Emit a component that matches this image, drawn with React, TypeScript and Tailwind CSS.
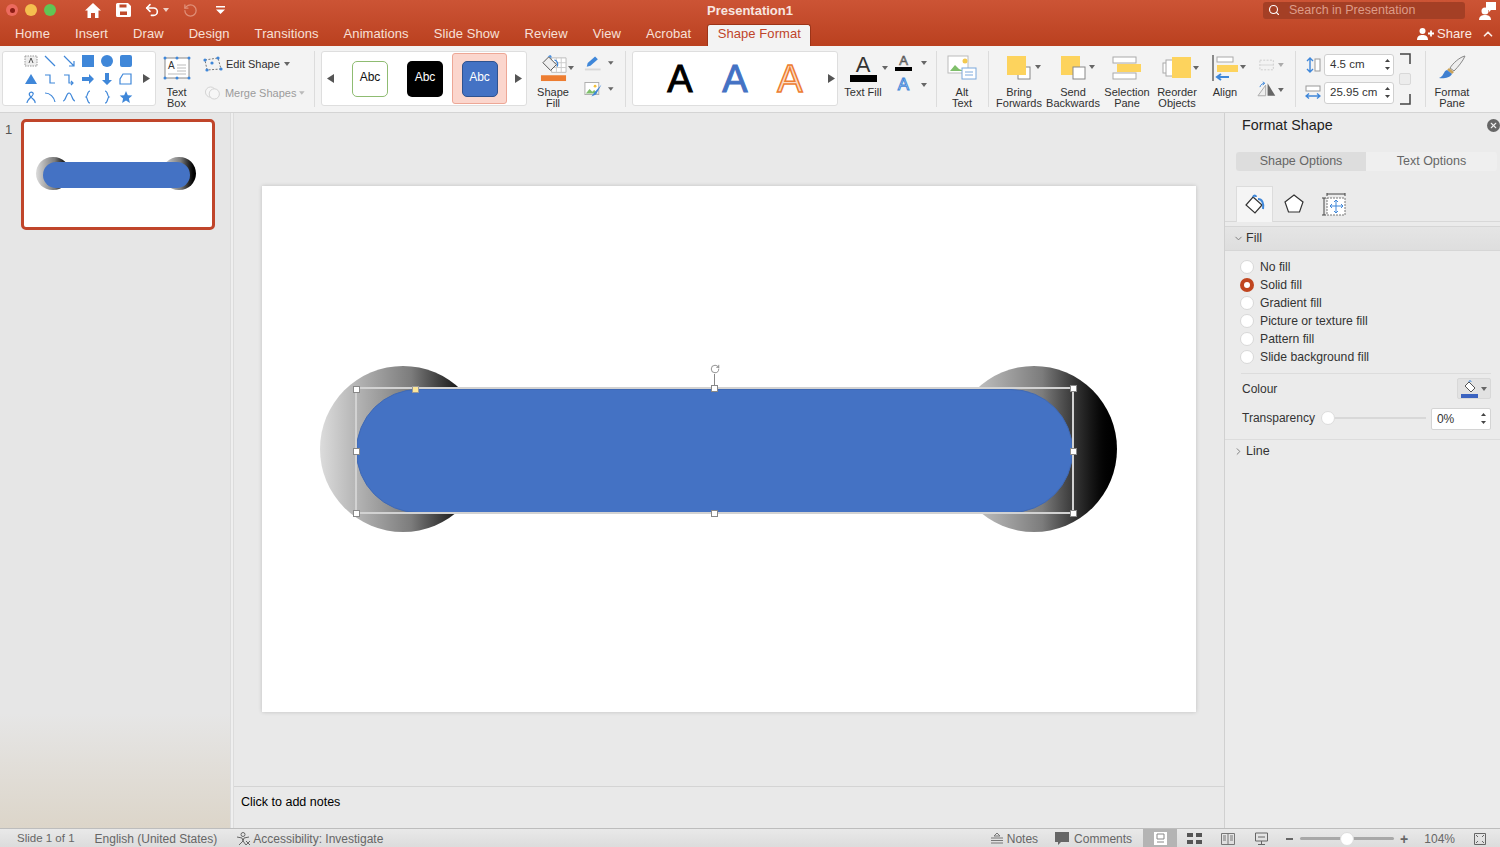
import { ChevronDown, ChevronRight, ChevronUp, RotateCw, Search, Undo2, X } from 'lucide-react';
import type { ReactNode } from 'react';

const blue = '#3f87d9';

const Caret = ({ className = '' }: { className?: string }) => (
  <svg width="6" height="4" viewBox="0 0 6 4" className={className}>
    <path d="M0 0h6L3 4z" fill="#666" />
  </svg>
);

const Sep = ({ ml }: { ml: string }) => <div className={`${ml} w-px h-[56px] bg-[#dcdcdc] shrink-0`} />;

const RibbonBtn = ({ label, icon, className }: { label: ReactNode; icon: ReactNode; className: string }) => (
  <div className={`${className} shrink-0 flex flex-col items-center`}>
    <div className="h-[36px] pb-[2px] flex items-center justify-center">{icon}</div>
    <div className="text-[11px] leading-[11px] text-center text-[#303030] whitespace-nowrap">{label}</div>
  </div>
);

const shapeIcons: ReactNode[] = [
  <g key="a"><rect x="1" y="2" width="12" height="10" fill="#eee" stroke="#999" strokeDasharray="1.5 1" /><path d="M5 9l2-5 2 5" stroke="#555" fill="none" /></g>,
  <path key="b" d="M2 2l10 10" stroke={blue} strokeWidth="1.2" />,
  <path key="c" d="M2 2l10 10M12 7v5H7" stroke={blue} strokeWidth="1.2" fill="none" />,
  <rect key="d" x="1" y="1" width="12" height="12" fill={blue} />,
  <circle key="e" cx="7" cy="7" r="6" fill={blue} />,
  <rect key="f" x="1" y="1" width="12" height="12" rx="2" fill={blue} />,
  <path key="g" d="M7 2l6 10H1z" fill={blue} />,
  <path key="h" d="M2 3h5v8h5" stroke={blue} strokeWidth="1.2" fill="none" />,
  <path key="i" d="M2 3h5v8h4M9 9l2 2-2 2" stroke={blue} strokeWidth="1.2" fill="none" />,
  <path key="j" d="M1 5h7V2l5 5-5 5V9H1z" fill={blue} />,
  <path key="k" d="M5 1h4v7h3l-5 5-5-5h3z" fill={blue} />,
  <path key="l" d="M4 2h8v10H1V7z" fill="none" stroke={blue} strokeWidth="1.2" />,
  <path key="m" d="M3 13c0-4 8-8 6-10C7 1 4 3 6 6c2 3 6 4 5 7" stroke={blue} strokeWidth="1.2" fill="none" />,
  <path key="n" d="M2 3c5 0 9 4 10 9" stroke={blue} strokeWidth="1.2" fill="none" />,
  <path key="o" d="M1 11c3 0 3-8 6-8s3 8 6 8" stroke={blue} strokeWidth="1.2" fill="none" />,
  <path key="p" d="M9 1C6 1 7 6 5 7c2 1 1 6 4 6" stroke={blue} strokeWidth="1.2" fill="none" />,
  <path key="q" d="M5 1c3 0 2 5 4 6-2 1-1 6-4 6" stroke={blue} strokeWidth="1.2" fill="none" />,
  <path key="r" d="M7 1l1.8 4.2 4.5.4-3.4 3 1 4.4L7 10.6 3.100 13l1-4.400-3.400-3 4.500-.4z" fill={blue} />,
];

const GalleryArrow = ({ left = false }: { left?: boolean }) => (
  <svg width="7" height="9" viewBox="0 0 7 9" className="shrink-0">
    <path d={left ? 'M7 0v9L0 4.500z' : 'M0 0v9l7-4.500z'} fill="#555" />
  </svg>
);

const TextBoxIcon = () => (
  <svg width="28" height="24" viewBox="0 0 28 24">
    <rect x="2" y="2" width="24" height="20" fill="#fff" stroke="#8a8a8a" />
    <path d="M14 9h9M14 12h9M14 15h9M5 18h18" stroke="#bbb" />
    <text x="5" y="13" fontSize="10" fontFamily="Liberation Sans" fill="#333">A</text>
    {[[2, 2], [14, 2], [26, 2], [2, 22], [26, 22], [14, 22]].map(([x, y]) => (
      <circle key={`${x}-${y}`} cx={x} cy={y} r="1.500" fill={blue} />
    ))}
  </svg>
);

const BucketIcon = ({ w = 27, bar = '#ed7d31' }: { w?: number; bar?: string }) => (
  <svg width={w} height="27" viewBox="0 0 28 28">
    <path d="M12 3h15v15H12z" fill="#fff" stroke="#bbb" />
    <path d="M17 3v15M22 3v15M12 8h15M12 13h15" stroke="#ccc" />
    <path d="M9 2l8 8-6 6-8-8z" fill="#eee" stroke="#555" />
    <path d="M9 2c1-2 3-1 2 1M15 5c3 1 4 4 3 7" stroke={blue} strokeWidth="1.400" fill="none" />
    <rect x="1" y="21" width="26" height="6" fill={bar} />
  </svg>
);

const BringIcon = ({ back = false }: { back?: boolean }) => (
  <svg width="26" height="26" viewBox="0 0 26 26">
    {back ? (
      <>
        <rect x="1" y="1" width="19" height="19" fill="#fdd35d" />
        <rect x="13" y="12" width="12" height="12" fill="#fff" stroke="#888" />
      </>
    ) : (
      <>
        <rect x="12" y="12" width="12" height="12" fill="#fff" stroke="#888" />
        <rect x="1" y="1" width="19" height="19" fill="#fdd35d" />
      </>
    )}
  </svg>
);

const Spinner = () => (
  <div className="flex flex-col gap-[5px] items-center w-[10px]">
    <svg width="5" height="3" viewBox="0 0 5 3"><path d="M0 3h5L2.500 0z" fill="#444" /></svg>
    <svg width="5" height="3" viewBox="0 0 5 3"><path d="M0 0h5L2.500 3z" fill="#444" /></svg>
  </div>
);

const SizeInput = ({ value }: { value: string }) => (
  <div className="w-[70px] h-[22px] bg-white border border-[#d0d0d0] rounded-[3px] flex items-center justify-between pl-[5px] pr-[1px] text-[11.5px] text-[#333]">
    {value}
    <Spinner />
  </div>
);

const Ribbon = () => (
  <div className="h-[66px] bg-[#f3f3f3] flex pt-[5px] pl-[2px]">
    <div className="w-[154px] h-[55px] bg-white border border-[#dedede] rounded-[3px] flex items-center shrink-0">
      <div className="ml-[18px] grid grid-cols-6 w-[114px] gap-y-[4px]">
        {shapeIcons.map((icon, i) => (
          <svg key={i} width="14" height="14" viewBox="0 0 14 14" className="justify-self-center">{icon}</svg>
        ))}
      </div>
      <div className="ml-[8px]"><GalleryArrow /></div>
    </div>
    <RibbonBtn className="ml-[4px] w-[33px]" icon={<TextBoxIcon />} label={<>Text<br />Box</>} />
    <div className="ml-[10px] w-[102px] shrink-0 text-[11px] text-[#303030] flex flex-col whitespace-nowrap">
      <div className="h-[22px] mt-[2px] flex items-center gap-[3px]">
        <svg width="20" height="16" viewBox="0 0 20 16">
          <path d="M2 4l13-2 3 11-14 1z" fill="none" stroke="#777" strokeDasharray="2 1.500" />
          {[[2, 4], [15, 2], [18, 13], [4, 14], [9, 7]].map(([x, y]) => <circle key={x} cx={x} cy={y} r="1.600" fill={blue} />)}
        </svg>
        Edit Shape <Caret className="ml-[1px]" />
      </div>
      <div className="h-[22px] mt-[7px] flex items-center gap-[5px] text-[#9b9b9b]">
        <svg width="16" height="16" viewBox="0 0 16 16" className="ml-[2px]"><circle cx="6" cy="7" r="5.500" fill="#f6f6f6" stroke="#d0d0d0" /><circle cx="10" cy="9" r="5.500" fill="#f6f6f6" stroke="#d0d0d0" /></svg>
        Merge Shapes <Caret className="-ml-[2px] opacity-40" />
      </div>
    </div>
    <Sep ml="ml-[9px]" />
    <div className="ml-[6px] w-[206px] h-[55px] bg-white border border-[#dedede] rounded-[3px] flex items-center shrink-0 pl-[5px]">
      <GalleryArrow left />
      <div className="ml-[18px] w-[36px] h-[36px] pb-[3px] rounded-[5px] bg-white border border-[#8fbc72] flex items-center justify-center text-[12px] text-[#111]">Abc</div>
      <div className="ml-[19px] w-[36px] h-[36px] pb-[3px] rounded-[5px] bg-black flex items-center justify-center text-[12px] text-white">Abc</div>
      <div className="ml-[9px] w-[55px] h-[51px] bg-[#fbd6cd] border border-[#eda796] rounded-[3px] flex items-center justify-center shrink-0">
        <div className="w-[36px] h-[36px] pb-[3px] rounded-[5px] bg-[#4472c4] border border-[#2f528f] flex items-center justify-center text-[12px] text-white">Abc</div>
      </div>
      <div className="ml-[8px]"><GalleryArrow /></div>
    </div>
    <RibbonBtn className="ml-[6px] w-[40px]" icon={<div className="relative"><BucketIcon /><Caret className="absolute -right-[7px] top-[11px]" /></div>} label={<>Shape<br />Fill</>} />
    <div className="ml-[11px] w-[30px] shrink-0 flex flex-col gap-[8px] pt-[3px]">
      <div className="flex items-center gap-[6px]">
        <svg width="20" height="18" viewBox="0 0 20 18"><path d="M3 13l1-4 8-7 3 3-8 7z" fill={blue} /><path d="M1 16h17" stroke="#d8d8d8" strokeWidth="2" /></svg>
        <Caret />
      </div>
      <div className="flex items-center gap-[6px]">
        <svg width="20" height="18" viewBox="0 0 20 18"><rect x="1" y="2" width="15" height="13" fill="#fff" stroke="#aaa" /><path d="M2 14l4-5 3 3 2-2 4 4z" fill="#7fbf6a" /><circle cx="12" cy="6" r="1.500" fill="#f3c13a" /><path d="M19 4l-8 9-3 4 5-2z" fill={blue} /></svg>
        <Caret />
      </div>
    </div>
    <Sep ml="ml-[11px]" />
    <div className="ml-[6px] w-[206px] h-[55px] bg-white border border-[#dedede] rounded-[3px] flex items-center shrink-0 font-['Liberation_Sans',sans-serif]">
      <span className="ml-[34px] w-[26px] text-center text-[38px] leading-none text-black [-webkit-text-stroke:1px_#000]">A</span>
      <span className="ml-[29px] w-[26px] text-center text-[38px] leading-none text-[#4472c4] [-webkit-text-stroke:1px_#4472c4]">A</span>
      <span className="ml-[29px] w-[26px] text-center text-[38px] leading-none text-[#fbdcc6] [-webkit-text-stroke:1.500px_#ed7d31]">A</span>
      <div className="ml-[25px]"><GalleryArrow /></div>
    </div>
    <RibbonBtn
      className="ml-[5px] w-[40px]"
      icon={
        <div className="relative w-[27px] h-[27px] flex flex-col items-center">
          <span className="text-[22px] leading-[20px] text-[#333]">A</span>
          <div className="w-[27px] h-[7px] bg-black" />
          <Caret className="absolute -right-[11px] top-[11px]" />
        </div>
      }
      label="Text Fill"
    />
    <div className="ml-[11px] w-[30px] shrink-0 flex flex-col items-start pl-[1px] gap-[5px] pt-[3px]">
      <div className="flex items-center gap-[9px]">
        <div className="flex flex-col items-center w-[17px]">
          <span className="text-[13px] leading-[13px] text-white [-webkit-text-stroke:0.700px_#555]">A</span>
          <div className="w-[17px] h-[4px] bg-black" />
        </div>
        <Caret />
      </div>
      <div className="flex items-center gap-[9px]">
        <span className="w-[17px] text-center text-[17px] leading-[17px] text-white [-webkit-text-stroke:1px_#3f87d9]">A</span>
        <Caret />
      </div>
    </div>
    <Sep ml="ml-[12px]" />
    <RibbonBtn
      className="ml-[10px] w-[30px]"
      icon={
        <svg width="30" height="26" viewBox="0 0 30 26">
          <rect x="1" y="1" width="20" height="17" fill="#fff" stroke="#bbb" />
          <path d="M3 16l5-6 4 4 5 2z" fill="#7fbf6a" />
          <circle cx="18" cy="6" r="2.500" fill="#f3c94f" />
          <rect x="15" y="13" width="14" height="11" fill="#fff" stroke="#7aa8dc" />
          <path d="M18 17h8M18 20h8" stroke="#7aa8dc" />
        </svg>
      }
      label={<>Alt<br />Text</>}
    />
    <Sep ml="ml-[11px]" />
    <RibbonBtn className="ml-[7px] w-[46px]" icon={<div className="relative"><BringIcon /><Caret className="absolute -right-[9px] top-[10px]" /></div>} label={<>Bring<br />Forwards</>} />
    <RibbonBtn className="ml-[5px] w-[52px]" icon={<div className="relative"><BringIcon back /><Caret className="absolute -right-[9px] top-[10px]" /></div>} label={<>Send<br />Backwards</>} />
    <RibbonBtn
      className="ml-[5px] w-[46px]"
      icon={
        <svg width="30" height="24" viewBox="0 0 30 24">
          <rect x="1" y="1" width="23" height="6" fill="#fff" stroke="#aaa" />
          <rect x="1" y="17" width="23" height="6" fill="#fff" stroke="#aaa" />
          <rect x="5" y="8" width="24" height="8" fill="#fdd35d" />
        </svg>
      }
      label={<>Selection<br />Pane</>}
    />
    <RibbonBtn
      className="ml-[5px] w-[44px]"
      icon={
        <div className="relative">
          <svg width="30" height="24" viewBox="0 0 30 24">
            <rect x="1" y="7" width="6" height="10" fill="#fff" stroke="#aaa" />
            <rect x="4" y="4" width="7" height="16" fill="#fff" stroke="#aaa" />
            <rect x="10" y="1" width="19" height="21" fill="#fdd35d" />
          </svg>
          <Caret className="absolute -right-[7px] top-[10px]" />
        </div>
      }
      label={<>Reorder<br />Objects</>}
    />
    <RibbonBtn
      className="ml-[9px] w-[34px]"
      icon={
        <div className="relative">
          <svg width="26" height="26" viewBox="0 0 26 26">
            <path d="M1 0v26" stroke="#666" strokeWidth="1.500" />
            <rect x="5" y="2" width="16" height="5" fill="#fff" stroke="#aaa" />
            <rect x="5" y="10" width="21" height="7" fill="#fdd35d" />
            <path d="M5 22h12M9 19l-4 3 4 3" stroke={blue} strokeWidth="2" fill="none" />
          </svg>
          <Caret className="absolute -right-[8px] top-[10px]" />
        </div>
      }
      label="Align"
    />
    <div className="ml-[15px] w-[27px] shrink-0 flex flex-col gap-[8px] pt-[6px]">
      <div className="flex items-center gap-[2px] opacity-50">
        <svg width="20" height="16" viewBox="0 0 20 16"><rect x="3" y="3" width="14" height="10" fill="none" stroke="#aaa" strokeDasharray="2 1.500" /><path d="M3 8h14" stroke="#bbb" /></svg>
        <Caret />
      </div>
      <div className="flex items-center gap-[2px]">
        <svg width="20" height="17" viewBox="0 0 20 17"><path d="M11 2l8 13h-8z" fill="#666" /><path d="M9 4L1 15h8z" fill="#eee" stroke="#aaa" /><path d="M3 6c1-3 3-4 5-4M8 2L6 0.500M8 2L6 4" stroke={blue} fill="none" /></svg>
        <Caret />
      </div>
    </div>
    <Sep ml="ml-[11px]" />
    <div className="ml-[9px] w-[107px] shrink-0 flex items-center h-[55px]">
      <div className="flex flex-col gap-[6px]">
        <div className="flex items-center gap-[3px]">
          <svg width="16" height="18" viewBox="0 0 16 18"><path d="M5 2v14M2 5l3-3 3 3M2 13l3 3 3-3" stroke={blue} strokeWidth="1.400" fill="none" /><rect x="10" y="3" width="5" height="12" fill="#fff" stroke="#999" /></svg>
          <SizeInput value="4.5 cm" />
        </div>
        <div className="flex items-center gap-[3px]">
          <svg width="16" height="18" viewBox="0 0 16 18"><rect x="1" y="2" width="14" height="5" fill="#fff" stroke="#999" /><path d="M1 12h14M4 9.500L1 12l3 2.500M12 9.500l3 2.500-3 2.500" stroke={blue} strokeWidth="1.400" fill="none" /></svg>
          <SizeInput value="25.95 cm" />
        </div>
      </div>
      <div className="ml-[5px] flex flex-col items-end gap-[9px]">
        <svg width="11" height="11" viewBox="0 0 11 11"><path d="M0 1h10v10" stroke="#444" strokeWidth="1.500" fill="none" /></svg>
        <div className="w-[12px] h-[12px] bg-[#ececec] border border-[#d8d8d8] rounded-[2px]" />
        <svg width="11" height="11" viewBox="0 0 11 11"><path d="M0 10h10V0" stroke="#444" strokeWidth="1.500" fill="none" /></svg>
      </div>
    </div>
    <Sep ml="ml-[13px]" />
    <RibbonBtn
      className="ml-[4px] w-[44px]"
      icon={
        <svg width="28" height="28" viewBox="0 0 28 28">
          <path d="M27 2C22 3 15 9 12 14l4 3c4-4 9-10 11-15z" fill="#eee" stroke="#888" />
          <path d="M11 14l5 4-2 2-5-4z" fill="#c9a25a" />
          <path d="M9 16c-3 1-3 4-5 6-1 1-3 2-3 2 4 1 11 0 13-4z" fill="#3f7fd0" />
        </svg>
      }
      label={<>Format<br />Pane</>}
    />
  </div>
);

const TitleBar = () => (
  <div className="h-[46px] shrink-0 bg-gradient-to-b from-[#cc5435] to-[#ba401f] text-white">
    <div className="h-[20px] grid grid-cols-[1fr_auto_1fr] items-center">
      <div className="flex items-center">
        <div className="ml-[6px] w-[12px] h-[12px] rounded-full bg-[#ec6a5e] flex items-center justify-center">
          <div className="w-[5px] h-[5px] rounded-full bg-[#8c1c14]" />
        </div>
        <div className="ml-[7px] w-[12px] h-[12px] rounded-full bg-[#f5bf4f]" />
        <div className="ml-[7px] w-[12px] h-[12px] rounded-full bg-[#61c554]" />
        <svg width="16" height="15" viewBox="0 0 16 15" className="ml-[29px]">
          <path d="M8 0L0 7.500h2.500V15H6v-5h4v5h3.500V7.500H16z" fill="#fff" />
        </svg>
        <svg width="15" height="14" viewBox="0 0 15 14" className="ml-[15px]">
          <path d="M0 1.500A1.500 1.500 0 011.500 0H12l3 3v9.500a1.500 1.500 0 01-1.500 1.500h-12A1.500 1.500 0 010 12.500z" fill="#fff" />
          <rect x="3.500" y="1.500" width="7" height="3" fill="#c04a2b" />
          <rect x="4" y="8.500" width="7" height="3.500" fill="#c04a2b" />
        </svg>
        <Undo2 size={16} strokeWidth={2.400} className="ml-[13px]" />
        <svg width="6" height="4" viewBox="0 0 6 4" className="ml-[3px]"><path d="M0 0h6L3 4z" fill="#f0d0c5" /></svg>
        <RotateCw size={15} strokeWidth={2} className="ml-[14px] text-[#e08f78] -scale-x-100" />
        <svg width="9" height="8" viewBox="0 0 9 8" className="ml-[18px]"><path d="M0 0h9v1.500H0zM0 3.500h9L4.500 8z" fill="#fff" /></svg>
      </div>
      <div className="text-[13px] font-bold leading-none text-[#f8e6e0]">Presentation1</div>
      <div className="flex items-center justify-end">
        <div className="w-[202px] h-[17px] bg-[#a43f25] rounded-[3px] flex items-center pl-[5px] text-[12.500px] text-[#dd9c88]">
          <Search size={12} strokeWidth={2.200} className="text-white" />
          <span className="ml-[9px]">Search in Presentation</span>
        </div>
        <svg width="17" height="19" viewBox="0 0 17 19" className="ml-[14px] mr-[4px]">
          <path d="M7 1h10v8h-5l-2 2V9H7z" fill="#fff" />
          <circle cx="6" cy="10" r="3.500" fill="#fff" />
          <path d="M0 19c0-4 3-5 6-5s6 1 6 5z" fill="#fff" />
        </svg>
      </div>
    </div>
    <div className="h-[26px] flex items-end pl-[15px] gap-[25px] text-[13px] tracking-[0.08px] text-[#f8e0d8]">
      {['Home', 'Insert', 'Draw', 'Design', 'Transitions', 'Animations', 'Slide Show', 'Review', 'View', 'Acrobat'].map((t) => (
        <div key={t} className="h-[22px] pb-[3px] flex items-center">{t}</div>
      ))}
      <div className="-ml-[9px] w-[104px] h-[22px] pb-[3px] bg-[#f3f3f3] rounded-t-[3px] border-t border-x border-[#9c3418] flex items-center justify-center text-[#c0452a]">
        Shape Format
      </div>
      <div className="ml-auto h-[22px] flex items-center text-[#fbeae4] pr-[5px] pb-[2px]">
        <svg width="18" height="12" viewBox="0 0 18 12" className="shrink-0">
          <circle cx="5.500" cy="3" r="3" fill="#fff" />
          <path d="M0 12c0-4 2.500-5 5.500-5s5.500 1 5.500 5z" fill="#fff" />
          <path d="M11 5.500h6M14 2.500v6" stroke="#fff" strokeWidth="1.800" />
        </svg>
        <span className="ml-[2px] text-[13px] font-medium">Share</span>
        <ChevronUp size={14} strokeWidth={3} className="ml-[9px]" />
      </div>
    </div>
  </div>
);

const SlidePanel = () => (
  <div className="w-[230px] shrink-0 flex pt-[6px] bg-[linear-gradient(to_bottom,#e6e6e6_0%,#e6e6e6_84%,#dcd5c9_100%)]">
    <div className="w-[21px] pl-[5px] pt-[1px] text-[13px] text-[#555]">1</div>
    <div className="relative w-[194px] h-[111px] bg-white border-[3px] border-[#c0452a] rounded-[5px]">
      <div className="absolute left-[12px] top-[35px] w-[34px] h-[33px] rounded-full bg-gradient-to-r from-[#dcdcdc] via-[#7c7c7c] via-55% to-black" />
      <div className="absolute left-[138px] top-[35px] w-[34px] h-[33px] rounded-full bg-gradient-to-r from-[#dcdcdc] via-[#7c7c7c] via-55% to-black" />
      <div className="absolute left-[19px] top-[40px] w-[147px] h-[26px] rounded-[13px] bg-[#4472c4]" />
    </div>
  </div>
);

const handles: [number, number][] = [
  [356, 389], [714, 388], [1073, 388], [356, 451], [1073, 451], [356, 513], [714, 513], [1073, 513],
];

// slide shapes live on a free canvas, offsets are slide coords
const Slide = () => (
  <div className="relative w-[934px] h-[526px] bg-white shadow-[0_0_4px_rgba(0,0,0,0.18)]">
    <div className="absolute left-[58px] top-[180px] w-[166px] h-[166px] rounded-full bg-gradient-to-r from-[#dcdcdc] via-[#7c7c7c] via-55% to-black" />
    <div className="absolute left-[689px] top-[180px] w-[166px] h-[166px] rounded-full bg-gradient-to-r from-[#dcdcdc] via-[#7c7c7c] via-55% to-black" />
    <div className="absolute left-[94px] top-[203px] w-[717px] h-[124px] rounded-[62px] bg-[#4472c4] border border-[#3f69b5]" />
    <div className="absolute left-[93px] top-[201px] w-[719px] h-[127px] border-2 border-[#d2d2d2]" />
    <div className="absolute left-[452px] top-[186px] w-px h-[16px] bg-[#888]" />
    <div className="absolute left-[447px] top-[177px] w-[11px] h-[11px] rounded-full bg-white flex items-center justify-center">
      <RotateCw size={10} strokeWidth={1.500} className="text-[#555]" />
    </div>
    {handles.map(([x, y]) => (
      <div
        key={`${x}-${y}`}
        className="absolute w-[7px] h-[7px] bg-white border border-[#888]"
        style={{ left: x - 262 - 3, top: y - 186 - 3 }}
      />
    ))}
    <div className="absolute left-[150px] top-[200px] w-[7px] h-[7px] bg-[#fde79a] border border-[#999]" />
  </div>
);

const Radio = ({ label, on = false }: { label: string; on?: boolean }) => (
  <div className="h-[18px] flex items-center">
    {on ? (
      <div className="w-[14px] h-[14px] rounded-full bg-[#c0451f] flex items-center justify-center shrink-0">
        <div className="w-[6px] h-[6px] rounded-full bg-white" />
      </div>
    ) : (
      <div className="w-[14px] h-[14px] rounded-full bg-white border border-[#d8d8d8] shrink-0" />
    )}
    <span className="ml-[6px] text-[12.200px] text-[#333]">{label}</span>
  </div>
);

const FormatPane = () => (
  <div className="w-[276px] shrink-0 bg-[#ebebeb] border-l border-[#d0d0d0] text-[#333]">
    <div className="h-[26px] flex items-center pl-[17px] text-[14.300px] font-medium text-[#222] relative">
      Format Shape
      <div className="absolute right-[0px] top-[6px] w-[13px] h-[13px] rounded-full bg-[#666] flex items-center justify-center">
        <X size={9} strokeWidth={3} className="text-[#eee]" />
      </div>
    </div>
    <div className="ml-[11px] mt-[13px] w-[261px] h-[19px] flex text-[12.500px] text-[#666] bg-[#efefef] rounded-[3px]">
      <div className="w-[130px] bg-[#dddddd] rounded-l-[3px] flex items-center justify-center">Shape Options</div>
      <div className="flex-1 flex items-center justify-center">Text Options</div>
    </div>
    <div className="mt-[15px] h-[36px] border-b border-[#d8d8d8] flex pl-[11px]">
      <div className="w-[37px] h-[36px] bg-[#f5f5f5] border border-b-0 border-[#dcdcdc] flex items-center justify-center">
        <svg width="22" height="22" viewBox="0 0 22 22">
          <path d="M9 3l9 8-7 8-9-8z" fill="#fff" stroke="#333" strokeWidth="1.200" />
          <path d="M9 3c1-2 3-2 3 0M14 5c4 0 6 4 5 10" stroke="#3f87d9" strokeWidth="2" fill="none" />
        </svg>
      </div>
      <div className="ml-[10px] w-[22px] h-[36px] flex items-center justify-center">
        <svg width="20" height="20" viewBox="0 0 20 20"><path d="M10 1l9 7-3.500 10h-11L1 8z" fill="#fff" stroke="#333" strokeWidth="1.200" /></svg>
      </div>
      <div className="ml-[17px] w-[24px] h-[36px] flex items-center justify-center">
        <svg width="24" height="24" viewBox="0 0 24 24">
          <path d="M5 2h18M5 1v3M23 1v3M2 6v17M0 6h4M0 23h4" stroke="#444" fill="none" />
          <rect x="5" y="6" width="18" height="17" fill="#fff" stroke="#777" strokeDasharray="2 1" />
          <path d="M14 8v13M8 14h13M12 10l2-2 2 2M12 19l2 2 2-2M10 12l-2 2 2 2M19 12l2 2-2 2" stroke="#3f87d9" fill="none" />
        </svg>
      </div>
    </div>
    <div className="mt-[4px] h-[25px] bg-gradient-to-b from-[#e5e5e5] to-[#dedede] border-y border-[#d6d6d6] flex items-center pl-[8px] text-[12.500px]">
      <ChevronDown size={11} className="text-[#777]" />
      <span className="ml-[2px]">Fill</span>
    </div>
    <div className="pl-[15px] pt-[7px]">
      <Radio label="No fill" />
      <Radio label="Solid fill" on />
      <Radio label="Gradient fill" />
      <Radio label="Picture or texture fill" />
      <Radio label="Pattern fill" />
      <Radio label="Slide background fill" />
    </div>
    <div className="ml-[16px] mr-[9px] mt-[7px] border-t border-[#dcdcdc] h-[30px] flex items-center justify-between text-[12px]">
      <span className="ml-[1px]">Colour</span>
      <div className="w-[34px] h-[21px] bg-[#e2e2e2] border border-[#d8d8d8] rounded-[2px] flex items-center justify-center gap-[3px]">
        <svg width="17" height="18" viewBox="0 0 17 18">
          <path d="M8 2l6 6-4 4-6-6z" fill="#fff" stroke="#555" />
          <path d="M8 2C8 0 10 0 10 2" stroke="#3f87d9" fill="none" />
          <rect x="0" y="14" width="17" height="4" fill="#3b63c0" />
        </svg>
        <Caret />
      </div>
    </div>
    <div className="ml-[17px] mr-[9px] h-[29px] flex items-center text-[12px]">
      Transparency
      <div className="ml-[6px] relative w-[105px] h-[2px] bg-[#d8d8d8]">
        <div className="absolute left-0 -top-[6px] w-[14px] h-[14px] rounded-full bg-white border border-[#dcdcdc]" />
      </div>
      <div className="ml-[5px] w-[60px] h-[22px] mt-[2px] bg-white border border-[#d4d4d4] rounded-[2px] flex items-center justify-between pl-[5px] pr-[1px]">
        0%
        <Spinner />
      </div>
    </div>
    <div className="mt-[7px] h-[24px] border-t border-[#dcdcdc] flex items-center pl-[8px] text-[12.500px]">
      <ChevronRight size={11} className="text-[#777]" />
      <span className="ml-[2px]">Line</span>
    </div>
  </div>
);

const StatusBar = () => (
  <div className="h-[19px] shrink-0 bg-gradient-to-b from-[#e9e9e9] to-[#dcdcdc] border-t border-[#bdbdbd] flex items-center pt-[1px] text-[12px] text-[#666]">
    <span className="ml-[17px] text-[11.500px]">Slide 1 of 1</span>
    <span className="ml-[20px]">English (United States)</span>
    <svg width="15" height="14" viewBox="0 0 15 14" className="ml-[19px]">
      <circle cx="7" cy="2.500" r="2" fill="none" stroke="#666" />
      <path d="M1 5l5 1 1 3 3 4M13 5L8 6 7 9l-4 4M10 9l4 4M14 9l-4 4" stroke="#666" fill="none" />
    </svg>
    <span className="ml-[2px]">Accessibility: Investigate</span>
    <svg width="14" height="11" viewBox="0 0 14 11" className="ml-auto">
      <path d="M7 0l3 3H4zM1 5h12M1 7.500h12M1 10h12" stroke="#777" fill="none" />
    </svg>
    <span className="ml-[3px]">Notes</span>
    <svg width="14" height="13" viewBox="0 0 14 13" className="ml-[17px]"><path d="M0 0h14v10H6l-3 3v-3H0z" fill="#666" /></svg>
    <span className="ml-[5px]">Comments</span>
    <div className="ml-[11px] w-[34px] h-[19px] bg-[#b4b4b4] flex items-center justify-center">
      <svg width="13" height="13" viewBox="0 0 13 13"><rect width="13" height="13" fill="#fff" /><path d="M3 2h7v5H3zM3 10h7" stroke="#888" fill="none" /></svg>
    </div>
    <svg width="15" height="11" viewBox="0 0 15 11" className="ml-[10px]"><path d="M0 0h6v4H0zM9 0h6v4H9zM0 7h6v4H0zM9 7h6v4H9z" fill="#555" /></svg>
    <svg width="14" height="12" viewBox="0 0 14 12" className="ml-[19px]"><path d="M.5.500h13v11H.5zM7 .5v11M2 3h3M2 5h3M2 7h3M9 3h3M9 5h3M9 7h3" stroke="#777" fill="none" /></svg>
    <svg width="13" height="13" viewBox="0 0 13 13" className="ml-[20px]"><path d="M.5 1h12v8H.5zM6.500 9v3M3 12.500h7M3 5h7" stroke="#666" fill="none" /></svg>
    <div className="ml-[18px] w-[7px] h-[2px] bg-[#666]" />
    <div className="ml-[7px] relative w-[94px] h-[3px] rounded-full bg-[#a8a8a8]">
      <div className="absolute left-[40px] -top-[5px] w-[14px] h-[14px] rounded-full bg-white border border-[#ddd]" />
    </div>
    <span className="ml-[6px] text-[14px] leading-none font-bold">+</span>
    <span className="ml-[16px]">104%</span>
    <svg width="12" height="12" viewBox="0 0 12 12" className="ml-[19px] mr-[14px]">
      <path d="M.5.500h11v11H.5zM2 2l2 2M10 2L8 4M2 10l2-2M10 10L8 8" stroke="#666" fill="none" />
    </svg>
  </div>
);

export default function App() {
  return (
    <div className="w-[1500px] h-[847px] overflow-hidden flex flex-col bg-[#e9e9e9] font-['Liberation_Sans',Arial,sans-serif]">
      <TitleBar />
      <Ribbon />
      <div className="h-px bg-[#d4d4d4] shrink-0" />
      <div className="flex-1 min-h-0 flex">
        <SlidePanel />
        <div className="w-[4px] shrink-0 bg-[#efefef] border-x border-[#dcdcdc]" />
        <div className="w-[990px] shrink-0 flex flex-col">
          <div className="flex-1 pt-[73px] pl-[28px]">
            <Slide />
          </div>
          <div className="h-[42px] border-t border-[#d4d4d4] pl-[7px] pt-[6px] text-[12.500px] text-black">
            Click to add notes
          </div>
        </div>
        <FormatPane />
      </div>
      <StatusBar />
    </div>
  );
}
